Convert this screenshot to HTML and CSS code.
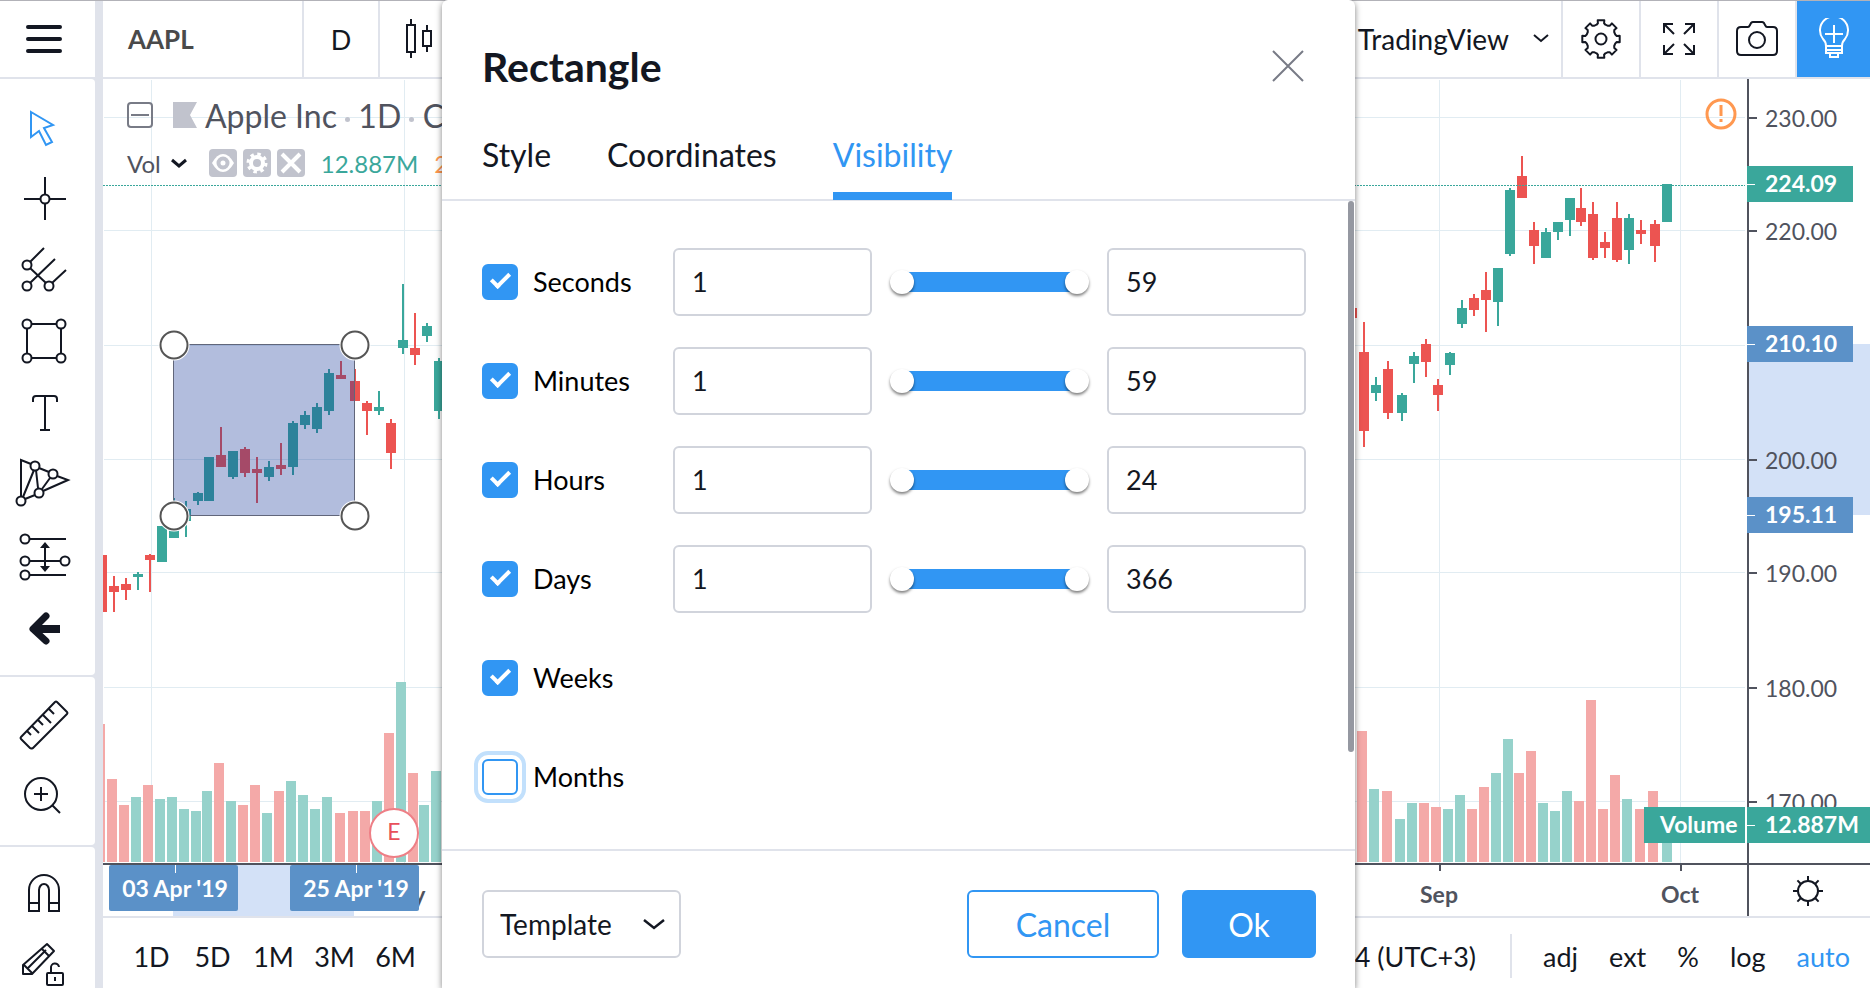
FILE: index.html
```html
<!DOCTYPE html>
<html lang="en">
<head>
    <meta charset="UTF-8">
    <meta name="viewport" content="width=device-width, initial-scale=1.0">
    <title>AAPL chart</title>
    <link rel="stylesheet" href="styles.css">
</head>
<body>

<div class="app">
    <!-- Drawing toolbar -->
    <aside class="sidebar">
        <button class="menu-button" aria-label="Menu">
            <svg class="line-icon" width="95" height="76" viewBox="0 0 95 76"><path stroke-width="4" stroke-linecap="round" d="M28 26h32M28 38h32M28 50h32"/></svg>
        </button>
        <div class="tool-group">
            <button class="tool active" aria-label="Cursor"><svg class="line-icon" viewBox="0 0 95 72"><path d="M31 22l22 13-9 3 8 14-6 3-7-14-8 6z"/></svg></button>
            <button class="tool" aria-label="Cross"><svg class="line-icon" viewBox="0 0 95 72"><path d="M45 15v17M45 42v16M24 37h16M50 37h16"/><circle cx="45" cy="37" r="4.5"/></svg></button>
            <button class="tool" aria-label="Pitchfork"><svg class="line-icon" viewBox="0 0 95 72"><circle cx="27" cy="31" r="4.5"/><circle cx="27" cy="52" r="4.5"/><circle cx="49" cy="52" r="4.5"/><path d="M30 28l14-14M30 49l25-24M52 49l14-13M30 34l16 15"/></svg></button>
            <button class="tool" aria-label="Shapes"><svg class="line-icon" viewBox="0 0 95 72"><circle cx="27" cy="18" r="4.5"/><circle cx="61" cy="18" r="4.5"/><circle cx="27" cy="52" r="4.5"/><circle cx="61" cy="52" r="4.5"/><path d="M31.5 18h25M31.5 52h25M27 22.5v25M61 22.5v25"/></svg></button>
            <button class="tool" aria-label="Text"><svg class="line-icon" viewBox="0 0 95 72"><path d="M33 24v-3q0-3 3-3h18q3 0 3 3v3M45 18v34M40 52h10"/></svg></button>
            <button class="tool" aria-label="Patterns"><svg class="line-icon" viewBox="0 0 95 72"><circle cx="35" cy="16" r="4.5"/><circle cx="53" cy="24" r="4.5"/><circle cx="39" cy="43" r="4.5"/><circle cx="21" cy="51" r="4.5"/><path d="M21 46V10l10 4M39 18l10 4M57 26l11 4-25 11M34 20L23 47M36 20l2 18M50 28l-8 11M25 49l10-4"/></svg></button>
            <button class="tool" aria-label="Position"><svg class="line-icon" viewBox="0 0 95 72"><circle cx="25" cy="17" r="4.5"/><circle cx="25" cy="39" r="4.5"/><circle cx="65" cy="39" r="4.5"/><circle cx="25" cy="53" r="4.5"/><path d="M30 17h36M30 39h30M30 53h36M45 24v22"/><path fill="currentColor" stroke="none" d="M45 20l5 6H40zM45 50l5-6H40z"/></svg></button>
            <button class="tool" aria-label="Back"><svg class="line-icon" viewBox="0 0 95 72"><path stroke-width="7" stroke-linecap="round" stroke-linejoin="round" d="M46 22L33 35l13 12"/><path stroke-width="8" d="M35 35h25"/></svg></button>
        </div>
        <div class="tool-group">
            <button class="tool" aria-label="Measure"><svg class="line-icon" viewBox="0 0 95 72"><path stroke-linejoin="round" d="M57 13l10 10q1 1 0 2L33 59q-2 1-3 0L21 50q-1-1 0-2l34-35q1-1 2 0zM27 42l4 4M32 37l7 7M38 31l5 5M43 26l8 8M49 20l5 5"/></svg></button>
            <button class="tool" aria-label="Zoom in"><svg class="line-icon" viewBox="0 0 95 72"><circle cx="41" cy="33" r="16"/><path d="M34 33h14M41 26v14M52 44l8 8"/></svg></button>
        </div>
        <div class="tool-group">
            <button class="tool" aria-label="Magnet"><svg class="line-icon" viewBox="0 0 95 72"><path d="M29 54V33a15 15 0 0 1 30 0v21H49V33a5 6 0 0 0-10 0v21zM29 46h10M49 46h10"/></svg></button>
            <button class="tool" aria-label="Lock drawings"><svg class="line-icon" viewBox="0 0 95 72"><path stroke-linejoin="round" d="M47 15l7 7-22 23h-9v-9zM42 20l7 7M24 36l8 8M28 39l18-18"/><rect x="47" y="44" width="16" height="12" rx="1"/><path d="M51 44v-5a4 4 0 0 1 8-1M55 48v4"/></svg></button>
        </div>
    </aside>

    <main class="workspace">
        <!-- Top bar -->
        <header class="topbar">
            <button class="symbol">AAPL</button>
            <button class="interval">D</button>
            <button class="chart-type" aria-label="Candles"><svg class="line-icon" width="32" height="42" viewBox="0 0 32 42"><path d="M3 7h8v27H3zM7 1v6M7 34v6M19 13h8v15h-8zM23 7v6M23 28v6"/></svg></button>
            <button class="layout-name">TradingView
                <svg class="line-icon" width="18" height="12" viewBox="0 0 18 12"><path d="M2 2l7 6 7-6"/></svg>
            </button>
            <button class="top-icon" aria-label="Settings"><svg class="line-icon" width="42" height="42" viewBox="-21 -21 42 42"><circle r="5.5"/><path id="gear" stroke-linejoin="round" d=""/></svg></button>
            <button class="top-icon" aria-label="Fullscreen"><svg class="line-icon" width="34" height="34" viewBox="0 0 34 34"><path d="M2 11V2h9M2 2l10 10M23 2h9v9M32 2L22 12M2 23v9h9M2 32l10-10M32 23v9h-9M32 32L22 22"/></svg></button>
            <button class="top-icon" aria-label="Snapshot"><svg class="line-icon" width="42" height="38" viewBox="0 0 42 38"><path d="M5 7h7q1 0 2-2l1-2q1-1 2-1h9q1 0 2 1l1 2q1 2 2 2h6q4 0 4 4v20q0 4-4 4H5q-4 0-4-4V11q0-4 4-4z"/><circle cx="21" cy="20" r="8"/></svg></button>
            <button class="publish" aria-label="Publish idea"><svg class="line-icon" width="32" height="42" viewBox="0 0 32 42"><path d="M8 28q0-4-3-7a14 14 0 1 1 22 0q-3 3-3 7zM8 28v7h16v-7M8 32h16M12 35v4h8v-4M16 7v18M7 16h18"/></svg></button>
        </header>

        <!-- Chart -->
        <section class="chart">
            <svg class="chart-canvas" id="chart" viewBox="103 79 1767 837"></svg>
            <div class="legend">
                <div class="legend-row legend-title">
                    <svg class="legend-icon" width="26" height="26" viewBox="0 0 26 26"><rect x="1" y="1" width="24" height="24" rx="3"/><path d="M4 13h18"/></svg>
                    <svg class="flag" width="24" height="26" viewBox="0 0 24 26"><path d="M0 0h24l-7 13 7 13H0z"/></svg>
                    <span>Apple Inc <i></i> 1D <i></i> Cboe BZX</span>
                </div>
                <div class="legend-row legend-volume">
                    <span>Vol</span>
                    <svg class="line-icon" width="16" height="10" viewBox="0 0 16 10"><path stroke-width="3" d="M1 2l7 6 7-6"/></svg>
                    <div class="legend-buttons">
                        <button aria-label="Hide"><svg width="28" height="28" viewBox="0 0 28 28"><path fill="#fff" d="M3 14q5-9 11-9t11 9q-5 9-11 9T3 14z"/><circle cx="14" cy="14" r="4.5" fill="#fff" stroke="#c1c3cd" stroke-width="4"/></svg></button>
                        <button aria-label="Format"><svg width="28" height="28" viewBox="0 0 28 28"><circle cx="14" cy="14" r="6" fill="none" stroke="#fff" stroke-width="4"/><circle cx="14" cy="14" r="9" fill="none" stroke="#fff" stroke-width="3" stroke-dasharray="3.5 3.57"/></svg></button>
                        <button aria-label="Remove"><svg width="28" height="28" viewBox="0 0 28 28"><path stroke="#fff" stroke-width="4" d="M5 5l18 18M23 5L5 23"/></svg></button>
                    </div>
                    <span class="up">12.887M</span>
                    <span class="average">23.012M</span>
                </div>
            </div>
        </section>

        <!-- Bottom bar -->
        <footer class="bottombar">
            <button class="range-button">1D</button>
            <button class="range-button">5D</button>
            <button class="range-button">1M</button>
            <button class="range-button">3M</button>
            <button class="range-button">6M</button>
            <div class="bottom-right">
                <button class="clock">14:23:34 (UTC+3)</button>
                <button>adj</button>
                <button>ext</button>
                <button>%</button>
                <button>log</button>
                <button class="active">auto</button>
            </div>
        </footer>
    </main>
</div>

<!-- Properties dialog -->
<div class="dialog" role="dialog" aria-labelledby="dialog-title">
    <div class="dialog-header">
        <h1 id="dialog-title">Rectangle</h1>
        <button class="close" aria-label="Close"><svg width="32" height="32" viewBox="0 0 32 32"><path d="M1 1l30 30M31 1L1 31"/></svg></button>
    </div>
    <div class="tabs">
        <button class="tab">Style</button>
        <button class="tab">Coordinates</button>
        <button class="tab active">Visibility</button>
    </div>
    <div class="dialog-body">
        <div class="option">
            <label><input type="checkbox" checked>Seconds</label>
            <input class="number" type="text" value="1" aria-label="Seconds from">
            <div class="slider"><input type="range" min="1" max="59" value="1" aria-label="Seconds minimum"><input type="range" min="1" max="59" value="59" aria-label="Seconds maximum"></div>
            <input class="number" type="text" value="59" aria-label="Seconds to">
        </div>
        <div class="option">
            <label><input type="checkbox" checked>Minutes</label>
            <input class="number" type="text" value="1" aria-label="Minutes from">
            <div class="slider"><input type="range" min="1" max="59" value="1" aria-label="Minutes minimum"><input type="range" min="1" max="59" value="59" aria-label="Minutes maximum"></div>
            <input class="number" type="text" value="59" aria-label="Minutes to">
        </div>
        <div class="option">
            <label><input type="checkbox" checked>Hours</label>
            <input class="number" type="text" value="1" aria-label="Hours from">
            <div class="slider"><input type="range" min="1" max="24" value="1" aria-label="Hours minimum"><input type="range" min="1" max="24" value="24" aria-label="Hours maximum"></div>
            <input class="number" type="text" value="24" aria-label="Hours to">
        </div>
        <div class="option">
            <label><input type="checkbox" checked>Days</label>
            <input class="number" type="text" value="1" aria-label="Days from">
            <div class="slider"><input type="range" min="1" max="366" value="1" aria-label="Days minimum"><input type="range" min="1" max="366" value="366" aria-label="Days maximum"></div>
            <input class="number" type="text" value="366" aria-label="Days to">
        </div>
        <div class="option">
            <label><input type="checkbox" checked>Weeks</label>
        </div>
        <div class="option">
            <label><input class="focused" type="checkbox">Months</label>
        </div>
        <div class="scroll-thumb"></div>
    </div>
    <div class="dialog-footer">
        <div class="template">
            <select aria-label="Template"><option>Template</option></select>
            <svg class="line-icon" width="22" height="14" viewBox="0 0 22 14"><path stroke-width="2.5" d="M1 2l10 8 10-8"/></svg>
        </div>
        <button class="cancel">Cancel</button>
        <button class="ok">Ok</button>
    </div>
</div>

<script>
const UP = '#3aa79b', DOWN = '#ec5451', UP_VOL = '#96d2cb', DOWN_VOL = '#f4a9a8', AXIS = '#50535e';

// Candles: x, high, body top, body bottom, low, direction
const candles = [
    [102,555,555,612,612,0],[114,576,586,592,612,0],[126,578,584,590,600,0],[138,572,574,577,590,1],
    [150,554,555,560,592,0],[162,526,526,562,562,1],[174,498,526,538,538,1],[186,501,509,521,537,1],
    [198,492,493,501,505,1],[209,457,457,501,501,1],[221,427,455,467,467,0],[233,451,451,477,479,1],
    [245,447,449,473,477,0],[257,457,469,473,503,0],[269,461,467,477,481,1],[281,443,465,469,475,0],
    [293,421,423,467,475,1],[305,411,415,425,429,1],[317,403,407,429,433,1],[329,369,373,411,415,1],
    [341,361,375,379,379,0],[355,369,381,401,401,0],[367,401,403,411,435,0],[379,391,407,411,415,1],
    [391,419,423,453,469,0],[403,284,340,348,354,1],[415,313,348,355,365,0],[427,323,326,336,342,1],
    [439,358,361,411,419,1],[1352,308,308,318,318,0],[1364,322,352,431,447,0],[1376,377,385,393,401,1],
    [1388,361,369,413,419,0],[1402,393,395,413,421,1],[1414,352,356,364,383,1],[1426,339,344,362,377,0],
    [1438,379,385,395,411,0],[1450,352,353,365,375,1],[1462,300,308,324,328,1],[1474,294,298,310,316,0],
    [1486,272,290,300,332,0],[1498,268,268,302,326,1],[1510,188,190,254,256,1],[1522,156,176,198,198,0],
    [1534,222,230,246,264,0],[1546,228,232,258,258,1],[1558,222,222,232,240,1],[1570,198,198,220,236,1],
    [1581,188,208,222,226,0],[1593,202,214,258,260,0],[1605,232,242,248,258,0],[1617,202,218,260,262,0],
    [1629,214,218,250,264,1],[1641,220,230,234,244,0],[1655,220,224,246,262,0],[1667,184,184,222,222,1]
];

// Volume bars: x, top, direction
const volumes = [
    [100,724,0],[112,779,0],[124,805,0],[136,797,1],[148,785,0],[160,799,1],[172,797,1],[184,809,1],[196,811,1],
    [207,791,1],[219,763,0],[231,801,1],[243,805,0],[255,785,0],[267,813,1],[279,791,0],[291,781,1],[303,795,1],
    [315,809,1],[327,797,1],[340,813,0],[353,811,0],[365,811,0],[377,801,1],[389,733,0],[401,682,1],[413,773,0],
    [424,805,1],[436,771,1],[1362,731,0],[1374,789,1],[1387,791,0],[1400,819,1],[1412,803,1],[1424,803,0],
    [1436,807,0],[1448,809,1],[1460,795,1],[1472,809,0],[1484,787,0],[1496,773,1],[1508,739,1],[1519,773,0],
    [1531,751,0],[1543,803,1],[1555,811,1],[1567,791,1],[1579,801,0],[1591,700,0],[1603,809,0],[1615,775,0],
    [1627,799,1],[1640,809,0],[1653,791,0],[1667,809,1]
];

const prices = [[118,'230.00'],[231,'220.00'],[346,''],[460,'200.00'],[573,'190.00'],[688,'180.00'],[802,'170.00']];
const months = [152, 405, 1440, 1681];

const rect = (x, y, w, h, fill) => `<rect x="${x}" y="${y}" width="${w}" height="${h}" fill="${fill}"/>`;
const text = (x, y, label, cls) => `<text x="${x}" y="${y}" class="${cls}">${label}</text>`;
let out = '';

// Grid
months.forEach(x => out += rect(x - 1, 80, 1, 783, '#e1ecf2'));
prices.forEach(([y]) => out += rect(104, y - 1, 1641, 1, '#e1ecf2'));

// Series
volumes.forEach(([x, top, up]) => out += rect(x - 5, top, 10, 862 - top, up ? UP_VOL : DOWN_VOL));
candles.forEach(([x, high, top, bottom, low, up]) => {
    const color = up ? UP : DOWN;
    out += rect(x - 1, high, 2, low - high, color) + rect(x - 5, top, 10, bottom - top, color);
});
out += `<path d="M103 185.5H1745" stroke="${UP}" stroke-dasharray="2 1"/>`;

// Rectangle drawing with its handles
out += '<rect x="173.5" y="344.5" width="181" height="171" fill="rgba(21,56,153,.33)" stroke="#61667a"/>';
[[174, 345], [355, 345], [174, 516], [355, 516]].forEach(([x, y]) => {
    out += `<circle cx="${x}" cy="${y}" r="15.5" fill="#fff"/><circle cx="${x}" cy="${y}" r="13.5" fill="#fff" stroke="#555" stroke-width="2"/>`;
});

// Earnings mark and delay warning
out += `<circle cx="394" cy="833" r="24" fill="#fff" stroke="#ee7f86" stroke-width="2"/>` + text(394, 840, 'E', 'earnings');
out += `<circle cx="1721" cy="114" r="14" fill="none" stroke="#ff9850" stroke-width="3"/><path d="M1721 105v11M1721 119v3" stroke="#ff9850" stroke-width="3"/>`;

// Price axis
out += rect(1749, 344, 121, 171, '#d3e1f7') + rect(1747, 79, 2, 837, AXIS);
prices.forEach(([y, label]) => {
    if (label) out += rect(1749, y - 1, 8, 2, AXIS) + text(1765, y + 9, label, 'axis');
});
[[166, '224.09', UP], [326, '210.10', '#5b91c8'], [497, '195.11', '#5b91c8']].forEach(([y, label, fill]) => {
    out += rect(1747, y, 106, 36, fill) + rect(1747, y + 18, 8, 1, '#fff') + text(1765, y + 26, label, 'tag');
});
out += rect(1644, 807, 101, 36, UP) + text(1660, 833, 'Volume', 'tag');
out += rect(1745, 807, 2, 36, '#fff') + rect(1747, 807, 123, 36, UP) + rect(1747, 825, 8, 1, '#fff') + text(1765, 833, '12.887M', 'tag');

// Time axis
out += rect(103, 863, 1767, 2, AXIS) + rect(173, 865, 181, 51, '#d3e1f7') + text(403, 903, 'May', 'month');
[[109, "03 Apr '19"], [290, "25 Apr '19"]].forEach(([x, label]) => {
    out += `<rect x="${x}" y="865" width="129" height="46" rx="2" fill="#5b91c8"/>` + rect(x + 66, 865, 1, 8, '#fff') + text(x + 66, 897, label, 'date');
});
[[1440, 'Sep'], [1681, 'Oct']].forEach(([x, label]) => out += rect(x - 1, 865, 2, 6, AXIS) + text(x - 1, 903, label, 'month'));
out += '<g transform="translate(1808 891)" fill="none" stroke="#131722" stroke-width="2"><circle r="10"/>';
for (let i = 0; i < 8; i++) out += `<path d="M10 0h5" transform="rotate(${i * 45})"/>`;
out += '</g>';

document.getElementById('chart').innerHTML = out;

// Settings gear outline, eight teeth
const points = [];
for (let i = 0; i < 8; i++) {
    [[-17, 15], [-11, 16], [-10, 19], [10, 19], [11, 16], [17, 15]].forEach(([deg, r]) => {
        const a = (i * 45 + deg) * Math.PI / 180;
        points.push(`${(r * Math.cos(a)).toFixed(1)} ${(r * Math.sin(a)).toFixed(1)}`);
    });
}
document.getElementById('gear').setAttribute('d', `M${points.join('L')}z`);
</script>

</body>
</html>
```
FILE: styles.css
```css
/* Basic Reset */
* {
    margin: 0;
    padding: 0;
    box-sizing: border-box;
}
body {
    font-family: Lato, "Open Sans", sans-serif;
    font-size: 27px;
    color: #131722;
    background: #fff;
    height: 100vh;
    overflow: hidden;
}
button {
    font: inherit;
    color: inherit;
    background: none;
    border: 0;
    cursor: pointer;
}
svg {
    display: block;
    flex: none;
}
.line-icon {
    fill: none;
    stroke: currentColor;
    stroke-width: 2;
}

/* Page frame */
.app {
    display: flex;
    gap: 8px;
    height: 100vh;
    background: #e0e3eb;
    border-top: 1px solid #b2b2b8;
}
.workspace {
    flex: 1;
    min-width: 0;
    display: flex;
    flex-direction: column;
    gap: 2px;
}

/* Drawing toolbar */
.sidebar {
    width: 95px;
    display: flex;
    flex-direction: column;
    gap: 2px;
    overflow: hidden;
}
.menu-button {
    flex: none;
    height: 76px;
    background: #fff;
}
.tool-group {
    flex: none;
    background: #fff;
    border-radius: 0 4px 4px 0;
    padding: 11px 0 9px;
}
.tool-group + .tool-group {
    padding: 12px 0;
}
.tool-group:last-child {
    padding: 10px 0;
}
.tool {
    display: block;
    width: 100%;
    height: 72px;
}
.tool.active {
    color: #3196f3;
}

/* Top bar */
.topbar {
    flex: none;
    height: 76px;
    display: flex;
    gap: 2px;
}
.topbar button {
    background: #fff;
    display: flex;
    align-items: center;
    justify-content: center;
}
.topbar .symbol {
    width: 199px;
    justify-content: flex-start;
    padding-left: 25px;
    font-size: 26px;
    font-weight: bold;
    color: #4a4a4a;
}
.interval {
    width: 74px;
}
.topbar .chart-type {
    width: 80px;
    justify-content: flex-start;
    padding-left: 24px;
}
.topbar .layout-name {
    flex: 1;
    justify-content: flex-end;
    gap: 23px;
    padding-right: 11px;
    font-size: 28px;
}
.top-icon {
    width: 76px;
}
.topbar .publish {
    width: 73px;
    background: #3196f3;
    color: #fff;
}

/* Chart */
.chart {
    flex: 1;
    min-height: 0;
    position: relative;
    background: #fff;
}
.chart-canvas {
    width: 100%;
    height: 100%;
}
.chart-canvas text {
    font-size: 23px;
}
.axis {
    fill: #50535e;
}
.tag,
.date {
    fill: #fff;
    font-weight: bold;
}
.month {
    fill: #50535e;
    font-weight: bold;
}
.date,
.month,
.earnings {
    text-anchor: middle;
}
.earnings {
    fill: #e8505b;
}
.legend {
    position: absolute;
    top: 12px;
    left: 24px;
    white-space: nowrap;
    color: #50535e;
}
.legend-row {
    display: flex;
    align-items: center;
    height: 48px;
}
.legend-title {
    font-size: 32px;
}
.legend-title i {
    display: inline-block;
    width: 5px;
    height: 5px;
    border-radius: 50%;
    background: #c1c3cd;
    vertical-align: middle;
}
.legend-icon {
    fill: none;
    stroke: #787b86;
    stroke-width: 2;
    margin-right: 20px;
}
.flag {
    fill: #c1c3cd;
    margin-right: 8px;
}
.legend-volume {
    font-size: 24px;
    gap: 10px;
}
.legend-volume .line-icon {
    color: #131722;
}
.legend-buttons {
    display: flex;
    gap: 6px;
    margin: 0 6px 0 12px;
}
.legend-buttons button {
    background: #c1c3cd;
    border-radius: 4px;
}
.up {
    color: #3aa79b;
}
.average {
    margin-left: 6px;
    color: #ff9850;
}

/* Bottom bar */
.bottombar {
    flex: none;
    height: 70px;
    display: flex;
    align-items: center;
    padding: 6px 20px 0 18px;
    background: #fff;
}
.range-button {
    width: 61px;
}
.bottom-right {
    display: flex;
    align-items: center;
    gap: 31px;
    margin-left: auto;
}
.bottom-right .active {
    color: #3196f3;
}
.clock {
    height: 44px;
    padding-right: 34px;
    border-right: 2px solid #e0e3eb;
}

/* Properties dialog */
.dialog {
    position: absolute;
    top: 0;
    left: 442px;
    width: 913px;
    height: 100vh;
    display: flex;
    flex-direction: column;
    background: #fff;
    border-radius: 6px 6px 0 0;
    box-shadow: 0 2px 6px rgba(0, 0, 0, 0.5);
}
.dialog-header {
    display: flex;
    justify-content: space-between;
    align-items: center;
    height: 132px;
    padding: 0 51px 0 40px;
}
.dialog-header h1 {
    font-size: 41px;
}
.close svg {
    fill: none;
    stroke: #787b86;
    stroke-width: 2;
}
.tabs {
    display: flex;
    gap: 56px;
    height: 69px;
    padding: 0 40px;
    border-bottom: 2px solid #e0e3eb;
}
.tab {
    font-size: 32px;
    padding-bottom: 16px;
    margin-bottom: -1px;
    border-bottom: 8px solid transparent;
}
.tab.active {
    color: #3196f3;
    border-color: #3196f3;
}
.dialog-body {
    flex: 1;
    min-height: 0;
    position: relative;
    padding: 31px 40px 0;
}
.option {
    display: flex;
    align-items: center;
    gap: 18px;
    height: 99px;
    color: #000;
}
.option label {
    display: flex;
    align-items: center;
    gap: 15px;
    width: 173px;
}
.option input[type="checkbox"] {
    appearance: none;
    width: 36px;
    height: 36px;
    border: 2px solid #3196f3;
    border-radius: 6px;
    display: grid;
    place-items: center;
}
.option input[type="checkbox"]:checked {
    background: #3196f3;
}
.option input[type="checkbox"]:checked::before {
    content: "";
    width: 19px;
    height: 11px;
    box-sizing: border-box;
    border-left: 4px solid #fff;
    border-bottom: 4px solid #fff;
    transform: translateY(-3px) rotate(-45deg);
}
.option input.focused {
    outline: 4px solid #c2e0fc;
    outline-offset: 4px;
}
.number {
    width: 199px;
    height: 68px;
    padding: 0 17px;
    font: inherit;
    color: #131722;
    border: 2px solid #d1d4dc;
    border-radius: 6px;
}
.slider {
    position: relative;
    width: 199px;
    height: 24px;
}
.slider::before {
    content: "";
    position: absolute;
    inset: 2px 12px;
    background: #3196f3;
}
.slider input {
    appearance: none;
    position: absolute;
    top: 0;
    left: 0;
    width: 100%;
    height: 24px;
    background: none;
    pointer-events: none;
}
.slider input::-webkit-slider-thumb {
    appearance: none;
    width: 24px;
    height: 24px;
    border-radius: 50%;
    background: #fff;
    box-shadow: 0 2px 3px rgba(0, 0, 0, 0.5);
    pointer-events: auto;
}
.scroll-thumb {
    position: absolute;
    top: 0;
    right: 1px;
    width: 6px;
    height: 85%;
    border-radius: 3px;
    background: #9598a1;
}
.dialog-footer {
    display: flex;
    align-items: center;
    gap: 23px;
    height: 139px;
    padding: 9px 39px 0 40px;
    border-top: 2px solid #e0e3eb;
}
.template {
    position: relative;
    margin-right: auto;
}
.template select {
    appearance: none;
    width: 199px;
    height: 68px;
    padding: 0 16px;
    font: inherit;
    font-size: 28px;
    color: #131722;
    background: #fff;
    border: 2px solid #d1d4dc;
    border-radius: 6px;
}
.template svg {
    position: absolute;
    top: 28px;
    right: 16px;
    pointer-events: none;
}
.cancel,
.ok {
    height: 68px;
    font-size: 32px;
    border: 2px solid #3196f3;
    border-radius: 6px;
}
.cancel {
    width: 192px;
    color: #3196f3;
}
.ok {
    width: 134px;
    color: #fff;
    background: #3196f3;
}
```
